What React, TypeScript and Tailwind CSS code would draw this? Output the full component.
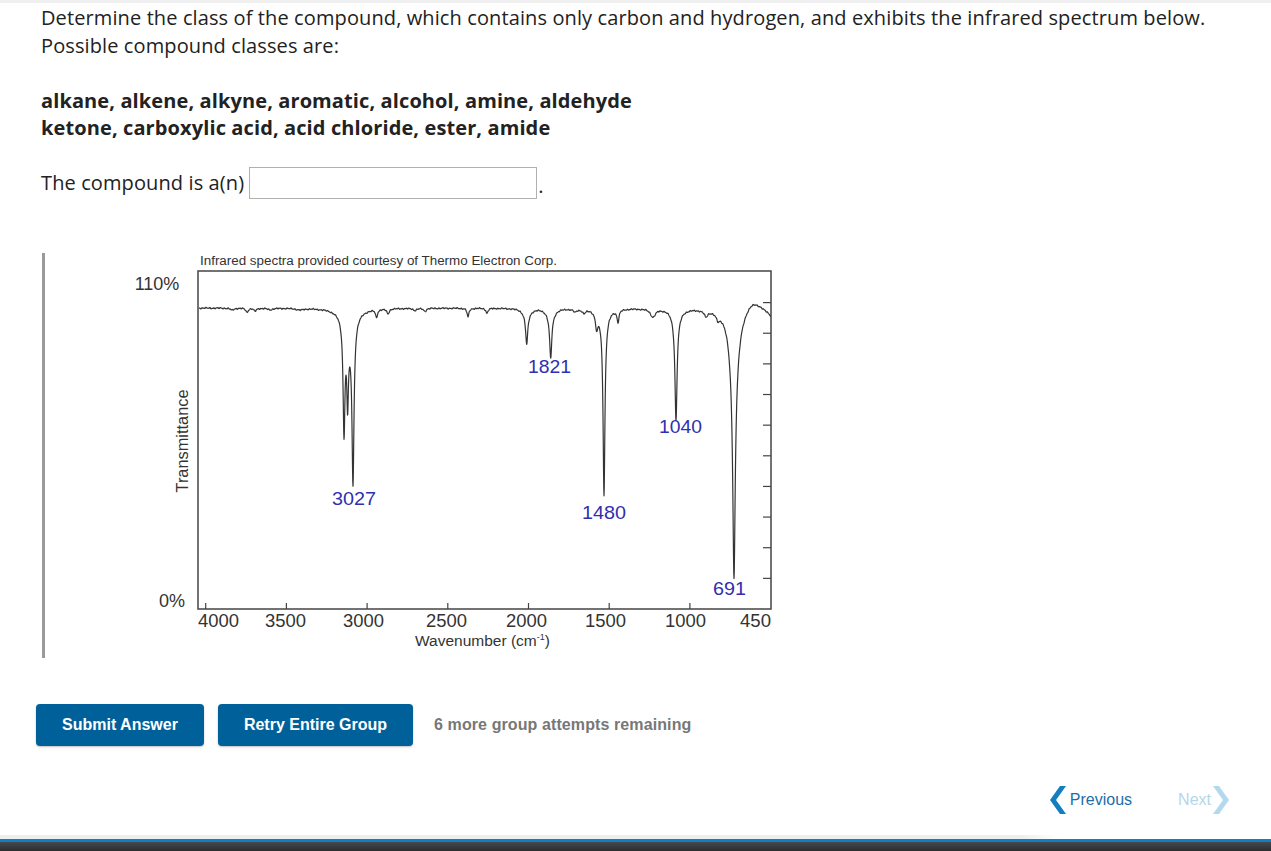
import React from 'react';

// dips along the trace: [centre x, depth px, half width px]
const dips: [number, number, number][] = [
  [232, 2, 2], [247, 4, 1.4], [255, 3, 1.4], [270, 1.5, 3], [300, 1.5, 4],
  [344, 108, 1.1], [347.6, 65, 0.9], [353, 155, 1.2], [349, 28, 6],
  [376.5, 8, 1.1], [388, 5, 1.3], [415, 2, 2], [425, 3, 1.5], [468, 9, 1.1], [487, 5, 1.2],
  [526.7, 28, 1.2], [526.7, 8, 4], [550.7, 40, 1.2], [550.7, 10, 4],
  [575, 3, 2], [584, 4, 2], [596.7, 16, 1.5], [604, 171, 1.1], [604, 15, 4],
  [618, 12, 1.2], [653, 8, 3], [676, 97, 1.2], [676, 15, 4],
  [706, 6, 2], [718, 6, 2], [734, 200, 1.4], [734, 70, 5], [776, 14, 5],
];

const traceY = (x: number) => {
  let y = 308;
  y += 0.35 * Math.sin(x * 1.7) + 0.3 * Math.sin(x * 3.1 + 1) + 0.25 * Math.sin(x * 0.53 + 2);
  y -= 9 * Math.exp(-(((x - 753) / 10) ** 2));
  for (const [c, d, w] of dips) y += d / (1 + ((x - c) / w) ** 2);
  return y;
};

const tracePath = (() => {
  const pts: string[] = [];
  for (let x = 199; x <= 771; x += 0.25) {
    pts.push(`${x.toFixed(2)},${traceY(x).toFixed(2)}`);
  }
  return 'M' + pts.join('L');
})();

const xLabels: [string, number, number][] = [
  ['4000', 198, 41], ['3500', 265, 41], ['3000', 343, 41], ['2500', 426, 41],
  ['2000', 506, 41], ['1500', 585, 41], ['1000', 665, 41], ['450', 740, 31],
];

const peakLabels: [string, number, number, number][] = [
  ['3027', 332, 505, 44], ['1821', 528, 373, 43], ['1480', 582, 519, 44],
  ['1040', 659, 433, 43], ['691', 713, 595, 33],
];

const Spectrum = () => (
  <svg width={740} height={405} viewBox="0 0 740 405">
    <g transform="translate(-45 -253)" fontFamily="'Liberation Sans', Arial, sans-serif">
      <text x={200} y={265} fontSize={12} fill="#333" textLength={357} lengthAdjust="spacingAndGlyphs">
        Infrared spectra provided courtesy of Thermo Electron Corp.
      </text>
      <rect x={198} y={271} width={573} height={338} fill="none" stroke="#444" strokeWidth={1.5} />
      {Array.from({ length: 10 }, (_, k) => {
        const y = 609 - (k + 1) * 30.64;
        return <line key={k} x1={763} x2={771} y1={y} y2={y} stroke="#444" strokeWidth={1.2} />;
      })}
      {Array.from({ length: 7 }, (_, k) => {
        const x = 205.7 + k * 80.7;
        return <line key={k} x1={x} x2={x} y1={603} y2={609} stroke="#444" strokeWidth={1.2} />;
      })}
      <path d={tracePath} fill="none" stroke="#333" strokeWidth={1.2} strokeLinejoin="round" />
      <text x={157} y={289.5} fontSize={18} fill="#333" textAnchor="middle">110%</text>
      <text x={172} y={606.5} fontSize={18} fill="#333" textAnchor="middle">0%</text>
      <text transform="translate(188 441) rotate(-90)" fontSize={16} fill="#333" textAnchor="middle" textLength={103} lengthAdjust="spacingAndGlyphs">
        Transmittance
      </text>
      {xLabels.map(([t, x, w]) => (
        <text key={t} x={x} y={627} fontSize={17.5} fill="#333" textLength={w} lengthAdjust="spacingAndGlyphs">{t}</text>
      ))}
      <text x={415} y={646} fontSize={15.5} fill="#333">
        Wavenumber (cm<tspan fontSize={9} dy={-6}>-1</tspan><tspan dy={6}>)</tspan>
      </text>
      {peakLabels.map(([t, x, y, w]) => (
        <text key={t} x={x} y={y} fontSize={18.5} fill="#2f2fb0" textLength={w} lengthAdjust="spacingAndGlyphs">{t}</text>
      ))}
    </g>
  </svg>
);

const Chevron = ({ dir, color }: { dir: 'left' | 'right'; color: string }) => (
  <svg width={16} height={28} viewBox="0 0 16 28">
    <polygon
      points={dir === 'left' ? '10,0 16,0 6,14 16,28 10,28 0,14' : '0,0 6,0 16,14 6,28 0,28 10,14'}
      fill={color}
    />
  </svg>
);

export default function App() {
  return (
    <div className="h-[851px] w-full flex flex-col bg-white overflow-hidden">
      <div className="h-[3px] bg-[#efefef]" />
      <div className="pl-[41px] pt-[1px] text-[#222] font-['Open_Sans',sans-serif] text-[20px] tracking-[0.11px]">
        <p className="leading-[28px]">
          Determine the class of the compound, which contains only carbon and hydrogen, and exhibits the infrared spectrum below.
          <br />
          Possible compound classes are:
        </p>
        <p className="mt-[27px] leading-[27px] font-bold">
          alkane, alkene, alkyne, aromatic, alcohol, amine, aldehyde
          <br />
          ketone, carboxylic acid, acid chloride, ester, amide
        </p>
        <div className="mt-[26px] flex items-center h-[32px]">
          <span>The compound is a(n)</span>
          <input className="ml-[5px] w-[288px] h-[32px] border border-[#b0b0b0] bg-white" />
          <span className="ml-[1px] self-end leading-[26px]">.</span>
        </div>
      </div>

      <div className="mt-[54px] ml-[42px] flex h-[405px] border-l-[3px] border-[#9a9a9a]">
        <Spectrum />
      </div>

      <div className="mt-[46px] ml-[36px] flex items-center font-['Liberation_Sans',Arial,sans-serif] text-[16px] font-bold">
        <button className="h-[42px] px-[26px] rounded-[4px] bg-[#00619a] text-white shadow-[0_1px_2px_rgba(0,0,0,0.25)]">
          Submit Answer
        </button>
        <button className="ml-[14px] h-[42px] px-[26px] rounded-[4px] bg-[#00619a] text-white shadow-[0_1px_2px_rgba(0,0,0,0.25)]">
          Retry Entire Group
        </button>
        <span className="ml-[21px] text-[#777] tracking-[0.1px]">6 more group attempts remaining</span>
      </div>

      <div className="mt-[40px] h-[28px] pr-[42px] flex items-center justify-end font-['Liberation_Sans',Arial,sans-serif] text-[16px]">
        <Chevron dir="left" color="#137ec0" />
        <span className="ml-[4px] text-[#1d6ea8]">Previous</span>
        <span className="ml-[46px] text-[#b5d6ea]">Next</span>
        <span className="ml-[2px] flex"><Chevron dir="right" color="#b3d9ee" /></span>
      </div>

      <div className="mt-auto">
        <div className="h-[4px] bg-[linear-gradient(to_right,#eeeeee_0,#eeeeee_1020px,#ffffff_1060px)]" />
        <div className="h-[3px] bg-[#0a82c4]" />
        <div className="h-[9px] bg-[linear-gradient(to_bottom,#46484b,#2b2d2f)]" />
      </div>
    </div>
  );
}
